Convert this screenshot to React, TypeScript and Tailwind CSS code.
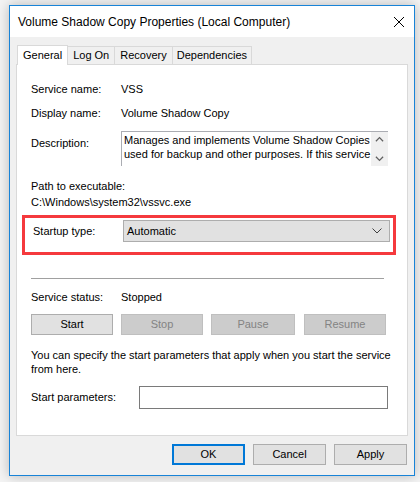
import React from "react";

const font = { fontFamily: '"Liberation Sans", Arial, sans-serif' };

function ChevronDown({ className }: { className?: string }) {
  return (
    <svg viewBox="0 0 10 6" className={className} fill="none" stroke="currentColor" strokeWidth="1">
      <path d="M0.5 0.5 L5 5 L9.5 0.5" />
    </svg>
  );
}

function ChevronUp({ className }: { className?: string }) {
  return (
    <svg viewBox="0 0 10 6" className={className} fill="none" stroke="currentColor" strokeWidth="1.4">
      <path d="M1 5.5 L5 1.5 L9 5.5" />
    </svg>
  );
}

function WinButton({ label, disabled, def, className }: { label: string; disabled?: boolean; def?: boolean; className?: string }) {
  return (
    <div
      className={
        "flex h-[21px] shrink-0 items-center justify-center border text-[11px] " +
        (disabled
          ? "border-[#bfbfbf] bg-[#cccccc] text-[#838383] "
          : def
          ? "border-2 border-[#0078d7] bg-[#e1e1e1] text-black "
          : "border-[#adadad] bg-[#e1e1e1] text-black ") +
        (className || "")
      }
    >
      {label}
    </div>
  );
}

export default function App() {
  return (
    <div className="h-[482px] w-[420px] overflow-hidden bg-[#f4f4f4] pl-[9px] pt-[5px]" style={font}>
      <div className="flex h-[471px] w-[406px] flex-col border border-[#1883d7] bg-[#f0f0f0] shadow-[0_0_12px_rgba(0,0,0,0.25)]">
        {/* Title bar */}
        <div className="flex h-[31px] items-center justify-between bg-white pl-[8px] pr-[10px]">
          <span className="text-[12px] text-black">Volume Shadow Copy Properties (Local Computer)</span>
          <svg viewBox="0 0 10 10" className="h-[10px] w-[10px] text-black" stroke="currentColor" strokeWidth="1">
            <path d="M0 0 L10 10 M10 0 L0 10" />
          </svg>
        </div>

        {/* Tabs */}
        <div className="mt-[8px] flex h-[19px] items-end pl-[7px] text-[11px]">
          <div className="relative z-10 -mb-px flex h-[20px] items-center border border-b-0 border-[#d9d9d9] bg-white px-[5px] text-black">
            General
          </div>
          <div className="flex h-[18px] items-center border border-l-0 border-b-0 border-[#d9d9d9] bg-[#f0f0f0] px-[5px]">Log On</div>
          <div className="flex h-[18px] items-center border border-l-0 border-b-0 border-[#d9d9d9] bg-[#f0f0f0] px-[5px]">Recovery</div>
          <div className="flex h-[18px] items-center border border-l-0 border-b-0 border-[#d9d9d9] bg-[#f0f0f0] px-[4px]">Dependencies</div>
        </div>

        {/* Panel */}
        <div className="mx-[6px] h-[372px] border border-[#d9d9d9] bg-white text-[11px] text-black">
          <div className="flex flex-col pl-[14px] pr-[17px] pt-[14px]">
            <div className="flex h-[20px] items-center">
              <span className="w-[90px] shrink-0">Service name:</span>
              <span>VSS</span>
            </div>
            <div className="mt-[4px] flex h-[20px] items-center">
              <span className="w-[90px] shrink-0">Display name:</span>
              <span>Volume Shadow Copy</span>
            </div>
            <div className="mt-[8px] flex">
              <span className="w-[90px] shrink-0 pt-[4px]">Description:</span>
              <div className="flex h-[35px] w-[267px] border border-b-0 border-r-0 border-[#abadb3]">
                <div className="h-[34px] min-w-0 flex-1 overflow-hidden whitespace-nowrap pl-[2px] pt-[1px] leading-[14px]">
                  <div>Manages and implements Volume Shadow Copies</div>
                  <div>used for backup and other purposes. If this service</div>
                </div>
                <div className="flex w-[17px] shrink-0 flex-col items-center justify-between bg-[#f0f0f0] py-[4px] text-[#606060]">
                  <ChevronUp className="h-[6px] w-[9px]" />
                  <ChevronUp className="h-[6px] w-[9px] rotate-180" />
                </div>
              </div>
            </div>
            <div className="mt-[12px] leading-[16px]">Path to executable:</div>
            <div className="leading-[16px]">C:\Windows\system32\vssvc.exe</div>
          </div>

          {/* Startup type highlight */}
          <div className="ml-[5px] mt-[5px] flex h-[40px] w-[374px] items-start border-[3px] border-[#f5393d] pl-[8px] pt-[2px]">
            <span className="flex h-[22px] w-[90px] shrink-0 items-center">Startup type:</span>
            <div className="flex h-[22px] w-[267px] items-center justify-between border border-[#adadad] bg-[#e1e1e1] pl-[3px] pr-[7px]">
              <span>Automatic</span>
              <ChevronDown className="h-[6px] w-[10px] text-[#404040]" />
            </div>
          </div>

          <div className="flex flex-col pl-[14px] pr-[10px]">
            <div className="mt-[23px] h-px w-[353px] bg-[#a0a0a0]" />
            <div className="mt-[10px] flex h-[17px] items-center">
              <span className="w-[90px] shrink-0">Service status:</span>
              <span>Stopped</span>
            </div>
            <div className="mt-[8px] flex">
              <WinButton label="Start" className="w-[82px]" />
              <WinButton label="Stop" disabled className="ml-[8px] w-[82px]" />
              <WinButton label="Pause" disabled className="ml-[8px] w-[84px]" />
              <WinButton label="Resume" disabled className="ml-[9px] w-[82px]" />
            </div>
            <div className="mt-[13px] whitespace-nowrap leading-[14px]">
              <div>You can specify the start parameters that apply when you start the service</div>
              <div>from here.</div>
            </div>
            <div className="mt-[10px] flex items-center">
              <span className="w-[108px] shrink-0">Start parameters:</span>
              <div className="h-[23px] w-[249px] border border-[#7a7a7a] bg-white" />
            </div>
          </div>
        </div>

        {/* Bottom buttons */}
        <div className="mt-[8px] flex justify-end gap-[8px] pr-[7px]">
          <WinButton label="OK" def className="w-[73px]" />
          <WinButton label="Cancel" className="w-[73px]" />
          <WinButton label="Apply" className="w-[73px]" />
        </div>
      </div>
    </div>
  );
}
